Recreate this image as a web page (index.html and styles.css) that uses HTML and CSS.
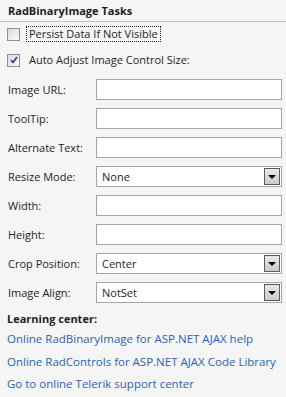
FILE: index.html
```html
<!DOCTYPE html>
<html lang="en">
<head>
  <meta charset="UTF-8">
  <title>RadBinaryImage Tasks</title>
  <link rel="stylesheet" href="styles.css">
</head>
<body>
  <div class="panel">
    <div class="title">RadBinaryImage Tasks</div>
    <div class="divider"></div>

    <label class="check-row">
      <span class="box"></span>
      <span class="check-text focused">Persist Data If Not Visible</span>
    </label>
    <label class="check-row">
      <span class="box checked">
        <svg width="8" height="8" viewBox="0 0 8 8"><path d="M1 4 L3 6.5 L7 1" fill="none" stroke="#2a3f8f" stroke-width="1.6"/></svg>
      </span>
      <span class="check-text">Auto Adjust Image Control Size:</span>
    </label>

    <div class="fields">
      <span class="label">Image URL:</span>
      <div class="input"></div>
      <span class="label">ToolTip:</span>
      <div class="input"></div>
      <span class="label">Alternate Text:</span>
      <div class="input"></div>
      <span class="label">Resize Mode:</span>
      <div class="input select"><span>None</span><span class="drop"></span></div>
      <span class="label">Width:</span>
      <div class="input"></div>
      <span class="label">Height:</span>
      <div class="input"></div>
      <span class="label">Crop Position:</span>
      <div class="input select"><span>Center</span><span class="drop"></span></div>
      <span class="label">Image Align:</span>
      <div class="input select"><span>NotSet</span><span class="drop"></span></div>
    </div>

    <div class="learn-title">Learning center:</div>
    <div class="links">
      <a href="#">Online RadBinaryImage for ASP.NET AJAX help</a>
      <a href="#">Online RadControls for ASP.NET AJAX Code Library</a>
      <a href="#">Go to online Telerik support center</a>
    </div>
  </div>
</body>
</html>
```

FILE: styles.css
```css
/* Page */
body {
  margin: 0;
  background: #f5f5f6;
  font-family: "Open Sans", "Noto Sans", sans-serif;
  font-size: 11px;
  color: #1e1e1e;
}

.panel {
  padding: 2px 4px 0 7px;
}

/* Header */
.title {
  font-weight: bold;
  height: 17px;
  line-height: 17px;
  padding-left: 1px;
}

.divider {
  height: 1px;
  background: #c4c4c4;
  margin: 2px -4px 4px -7px;
}

/* Checkboxes */
.check-row {
  display: flex;
  align-items: center;
  gap: 6px;
  height: 16px;
  margin-bottom: 10px;
}

.box {
  width: 11px;
  height: 11px;
  border: 1px solid #8e8f8f;
  background: linear-gradient(135deg, #dcdcdc, #f8f8f8);
  display: flex;
  align-items: center;
  justify-content: center;
  flex-shrink: 0;
}

.check-text {
  padding: 0 2px;
  border: 1px solid transparent;
  line-height: 14px;
}

.check-text.focused {
  border: 1px dotted #222;
}

/* Property grid */
.fields {
  display: grid;
  grid-template-columns: 89px 1fr;
  row-gap: 8px;
  margin-top: 11px;
  align-items: center;
}

.label {
  padding-left: 1px;
}

.input {
  height: 19px;
  border: 1px solid #a5a5a5;
  background: #fff;
}

.select {
  display: flex;
  align-items: center;
  justify-content: space-between;
  padding-left: 5px;
}

.drop {
  width: 14px;
  height: 15px;
  margin-right: 1px;
  border: 1px solid #5a5a5a;
  background: linear-gradient(#e8e8e8, #cbcbcb);
  position: relative;
}

.drop::after {
  content: "";
  position: absolute;
  left: 3px;
  top: 6px;
  border-left: 4px solid transparent;
  border-right: 4px solid transparent;
  border-top: 4px solid #000;
}

/* Learning center */
.learn-title {
  font-weight: bold;
  margin-top: 7px;
  height: 18px;
  line-height: 18px;
}

.links {
  display: flex;
  flex-direction: column;
}

.links a {
  color: #2c62ad;
  text-decoration: none;
  font-size: 11.5px;
  line-height: 22.5px;
}
```
